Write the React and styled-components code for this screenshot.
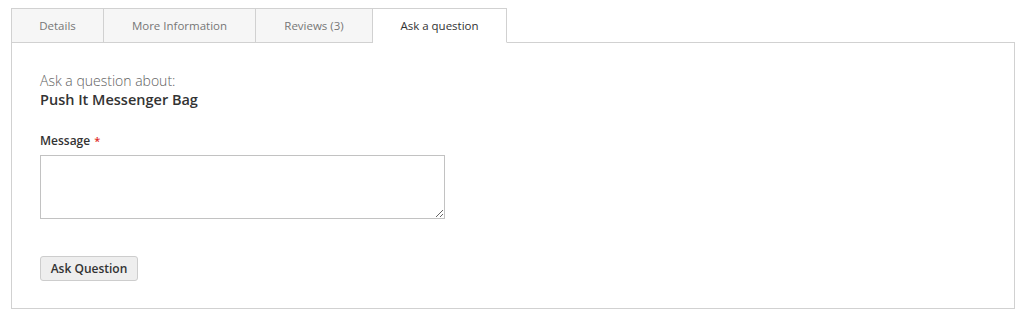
import React from "react";
import styled, { createGlobalStyle } from "styled-components";

const Global = createGlobalStyle`
  html, body { margin: 0; padding: 0; background: #fff; }
  body { font-family: "Open Sans", "Liberation Sans", sans-serif; color: #333; }
  * { box-sizing: border-box; }
`;

const Page = styled.div`
  padding: 8px 9px 0 11px;
`;

const TabBar = styled.div`
  display: flex;
  align-items: flex-end;
`;

const Tab = styled.div`
  width: ${(p) => p.w}px;
  height: 35px;
  display: flex;
  align-items: center;
  justify-content: center;
  font-size: 11.5px;
  white-space: nowrap;
  color: ${(p) => (p.active ? "#333" : "#777")};
  background: ${(p) => (p.active ? "#fff" : "#f6f6f6")};
  border: 1px solid #d1d1d1;
  border-bottom: ${(p) => (p.active ? "1px solid #fff" : "1px solid #d1d1d1")};
  border-left: ${(p) => (p.first ? "1px solid #d1d1d1" : "none")};
  margin-bottom: -1px;
  position: relative;
  z-index: ${(p) => (p.active ? 1 : 0)};
`;

const Panel = styled.div`
  border: 1px solid #d1d1d1;
  height: 267px;
  padding: 28px 28px;
`;

const Intro = styled.div`
  font-size: 14px;
  font-weight: 300;
  color: #5e5e5e;
  line-height: 19px;
`;

const Product = styled.div`
  font-size: 14.5px;
  font-weight: 600;
  color: #333;
  line-height: 19px;
`;

const Label = styled.label`
  display: block;
  margin-top: 24px;
  font-size: 12px;
  font-weight: 600;
  color: #333;
  line-height: 16px;
`;

const Required = styled.span`
  color: #e02b27;
  margin-left: 4px;
  font-size: 11px;
`;

const Textarea = styled.textarea`
  display: block;
  margin-top: 6px;
  width: 405px;
  height: 64px;
  border: 1px solid #c2c2c2;
  background: #fff;
  resize: vertical;
  font-family: inherit;
`;

const Button = styled.button`
  display: block;
  margin-top: 37px;
  width: 98px;
  height: 25px;
  background: #eee;
  border: 1px solid #cdcdcd;
  border-radius: 3px;
  font-family: inherit;
  font-size: 12px;
  font-weight: 600;
  color: #333;
  padding: 0;
`;

const tabs = [
  { label: "Details", w: 93 },
  { label: "More Information", w: 152 },
  { label: "Reviews (3)", w: 117 },
  { label: "Ask a question", w: 134, active: true },
];

export default function App() {
  return (
    <Page>
      <Global />
      <TabBar>
        {tabs.map((t, i) => (
          <Tab key={t.label} w={t.w} active={t.active} first={i === 0}>
            {t.label}
          </Tab>
        ))}
      </TabBar>
      <Panel>
        <Intro>Ask a question about:</Intro>
        <Product>Push It Messenger Bag</Product>
        <Label>
          Message<Required>*</Required>
        </Label>
        <Textarea />
        <Button>Ask Question</Button>
      </Panel>
    </Page>
  );
}
